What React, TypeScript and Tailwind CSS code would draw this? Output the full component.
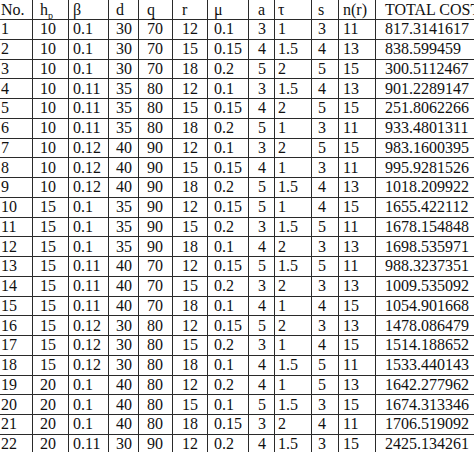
import React from "react";

const rows: string[][] = [
  ["1", "10", "0.1", "30", "70", "12", "0.1", "3", "1", "3", "11", "817.3141617"],
  ["2", "10", "0.1", "30", "70", "15", "0.15", "4", "1.5", "4", "13", "838.599459"],
  ["3", "10", "0.1", "30", "70", "18", "0.2", "5", "2", "5", "15", "300.5112467"],
  ["4", "10", "0.11", "35", "80", "12", "0.1", "3", "1.5", "4", "13", "901.2289147"],
  ["5", "10", "0.11", "35", "80", "15", "0.15", "4", "2", "5", "15", "251.8062266"],
  ["6", "10", "0.11", "35", "80", "18", "0.2", "5", "1", "3", "11", "933.4801311"],
  ["7", "10", "0.12", "40", "90", "12", "0.1", "3", "2", "5", "15", "983.1600395"],
  ["8", "10", "0.12", "40", "90", "15", "0.15", "4", "1", "3", "11", "995.9281526"],
  ["9", "10", "0.12", "40", "90", "18", "0.2", "5", "1.5", "4", "13", "1018.209922"],
  ["10", "15", "0.1", "35", "90", "12", "0.15", "5", "1", "4", "15", "1655.422112"],
  ["11", "15", "0.1", "35", "90", "15", "0.2", "3", "1.5", "5", "11", "1678.154848"],
  ["12", "15", "0.1", "35", "90", "18", "0.1", "4", "2", "3", "13", "1698.535971"],
  ["13", "15", "0.11", "40", "70", "12", "0.15", "5", "1.5", "5", "11", "988.3237351"],
  ["14", "15", "0.11", "40", "70", "15", "0.2", "3", "2", "3", "13", "1009.535092"],
  ["15", "15", "0.11", "40", "70", "18", "0.1", "4", "1", "4", "15", "1054.901668"],
  ["16", "15", "0.12", "30", "80", "12", "0.15", "5", "2", "3", "13", "1478.086479"],
  ["17", "15", "0.12", "30", "80", "15", "0.2", "3", "1", "4", "15", "1514.188652"],
  ["18", "15", "0.12", "30", "80", "18", "0.1", "4", "1.5", "5", "11", "1533.440143"],
  ["19", "20", "0.1", "40", "80", "12", "0.2", "4", "1", "5", "13", "1642.277962"],
  ["20", "20", "0.1", "40", "80", "15", "0.1", "5", "1.5", "3", "15", "1674.313346"],
  ["21", "20", "0.1", "40", "80", "18", "0.15", "3", "2", "4", "11", "1706.519092"],
  ["22", "20", "0.11", "30", "90", "12", "0.2", "4", "1.5", "3", "15", "2425.134261"],
];

const pads = [
  "pl-[1px]",
  "pl-[7px]",
  "pl-[4px]",
  "pl-[7px]",
  "pl-[8px]",
  "pl-[9px]",
  "pl-[6px]",
  "pl-[9px]",
  "pl-[3px]",
  "pl-[6px]",
  "pl-[4px]",
  "pl-[9px]",
];

const cellBase =
  "flex items-center border-r border-b border-[#2a2a2a] whitespace-nowrap overflow-hidden";

const header: React.ReactNode[] = [
  "No.",
  <span key="hp">
    h<sub className="text-[10px] align-[-2px]">p</sub>
  </span>,
  "β",
  "d",
  "q",
  "r",
  "μ",
  "a",
  "τ",
  "s",
  "n(r)",
  "TOTAL COST",
];

export default function App() {
  return (
    <div
      className="w-[474px] h-[452px] overflow-hidden bg-white text-[#111] text-[16px] leading-none"
      style={{ fontFamily: '"Liberation Serif", "Times New Roman", serif' }}
    >
      <div className="grid w-[486px] grid-cols-[33px_36px_40px_30px_34px_35px_41px_26px_37px_27px_37px_110px] grid-rows-[20px_repeat(22,19.75px)]">
        {header.map((h, i) => (
          <div key={`h${i}`} className={`${cellBase} ${pads[i]}`}>
            {h}
          </div>
        ))}
        {rows.map((r, ri) =>
          r.map((c, ci) => (
            <div key={`${ri}-${ci}`} className={`${cellBase} ${pads[ci]}`}>
              {c}
            </div>
          ))
        )}
      </div>
    </div>
  );
}
